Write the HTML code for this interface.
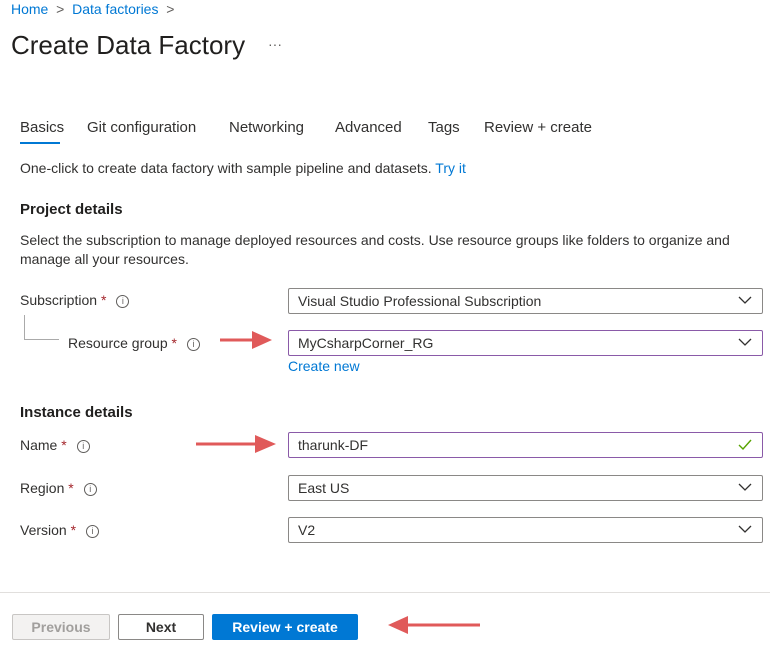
<!DOCTYPE html><html><head><style>
body{margin:0;width:770px;height:645px;background:#fff;font-family:"Liberation Sans",sans-serif;color:#323130;position:relative;overflow:hidden}
.a{position:absolute;white-space:nowrap}
.t{font-size:14px}
.box{position:absolute;left:288px;width:472px;height:24px;border:1px solid #8a8886;border-radius:2px;font-size:14px;line-height:24px;padding-left:9px;box-sizing:content-box;width:464px}
.p{border-color:#8a5aa8}
.chev{position:absolute;right:10px;top:7px}
.i{display:inline-block;width:11px;height:11px;border:1px solid #605e5c;border-radius:50%;font-size:9px;line-height:11px;text-align:center;vertical-align:1px;margin-left:10px;color:#605e5c}
.r{color:#a4262c}
.btn{position:absolute;top:614px;height:24px;border-radius:2px;font-size:14px;font-weight:bold;text-align:center;line-height:24px}
</style></head><body>
<div class="a t" style="left:11px;top:1px;color:#0078d4">Home <span style="color:#605e5c">&nbsp;&gt;&nbsp;</span> Data factories <span style="color:#605e5c">&nbsp;&gt;</span></div>
<div class="a" style="left:11px;top:30px;font-size:26px;color:#201f1e">Create Data Factory</div>
<div class="a" style="left:268px;top:36px;font-size:14px;color:#605e5c">···</div>
<div class="a" style="left:20px;top:119px;font-size:15px;color:#323130">Basics</div>
<div class="a" style="left:20px;top:142px;width:40px;height:2px;background:#0078d4"></div>
<div class="a" style="left:87px;top:119px;font-size:15px">Git configuration</div>
<div class="a" style="left:229px;top:119px;font-size:15px">Networking</div>
<div class="a" style="left:335px;top:119px;font-size:15px">Advanced</div>
<div class="a" style="left:428px;top:119px;font-size:15px">Tags</div>
<div class="a" style="left:484px;top:119px;font-size:15px">Review + create</div>
<div class="a t" style="left:20px;top:160px">One-click to create data factory with sample pipeline and datasets. <span style="color:#0078d4">Try it</span></div>
<div class="a" style="left:20px;top:201px;font-size:15px;font-weight:bold;color:#201f1e">Project details</div>
<div class="a t" style="left:20px;top:231px;line-height:19px">Select the subscription to manage deployed resources and costs. Use resource groups like folders to organize and<br>manage all your resources.</div>
<div class="a t" style="left:20px;top:292px">Subscription <span class="r">*</span><span class="i">i</span></div>
<div class="a" style="left:24px;top:315px;width:34px;height:24px;border-left:1px solid #aaa;border-bottom:1px solid #aaa"></div>
<div class="a t" style="left:68px;top:335px">Resource group <span class="r">*</span><span class="i">i</span></div>
<div class="box" style="top:288px">Visual Studio Professional Subscription<svg class="chev" width="14" height="9"><path d="M1 1l6 6 6-6" stroke="#323130" fill="none" stroke-width="1.3"/></svg></div>
<div class="box p" style="top:330px">MyCsharpCorner_RG<svg class="chev" width="14" height="9"><path d="M1 1l6 6 6-6" stroke="#323130" fill="none" stroke-width="1.3"/></svg></div>
<div class="a t" style="left:288px;top:358px;color:#0078d4">Create new</div>
<div class="a" style="left:20px;top:404px;font-size:15px;font-weight:bold;color:#201f1e">Instance details</div>
<div class="a t" style="left:20px;top:437px">Name <span class="r">*</span><span class="i">i</span></div>
<div class="box p" style="top:432px">tharunk-DF<svg class="chev" width="14" height="11" style="top:6px"><path d="M1 6l4 4 8-9" stroke="#57a300" fill="none" stroke-width="1.4"/></svg></div>
<div class="a t" style="left:20px;top:480px">Region <span class="r">*</span><span class="i">i</span></div>
<div class="box" style="top:475px">East US<svg class="chev" width="14" height="9"><path d="M1 1l6 6 6-6" stroke="#323130" fill="none" stroke-width="1.3"/></svg></div>
<div class="a t" style="left:20px;top:522px">Version <span class="r">*</span><span class="i">i</span></div>
<div class="box" style="top:517px">V2<svg class="chev" width="14" height="9"><path d="M1 1l6 6 6-6" stroke="#323130" fill="none" stroke-width="1.3"/></svg></div>
<div class="a" style="left:0;top:592px;width:770px;height:1px;background:#e1dfdd"></div>
<div class="btn" style="left:12px;width:96px;background:#f3f2f1;border:1px solid #c8c6c4;color:#a19f9d">Previous</div>
<div class="btn" style="left:118px;width:84px;border:1px solid #8a8886;color:#323130">Next</div>
<div class="btn" style="left:212px;width:146px;height:26px;background:#0078d4;color:#fff;line-height:26px">Review + create</div>
<svg class="a" style="left:0;top:0" width="770" height="645">
<g fill="#e05a5a" stroke="#e05a5a" stroke-width="3">
<line x1="220" y1="340" x2="255" y2="340"/><path d="M252 331l20 9-20 9z" stroke="none"/>
<line x1="196" y1="444" x2="258" y2="444"/><path d="M255 435l21 9-21 9z" stroke="none"/>
<line x1="480" y1="625" x2="406" y2="625"/><path d="M408 616l-20 9 20 9z" stroke="none"/>
</g></svg>
</body></html>
